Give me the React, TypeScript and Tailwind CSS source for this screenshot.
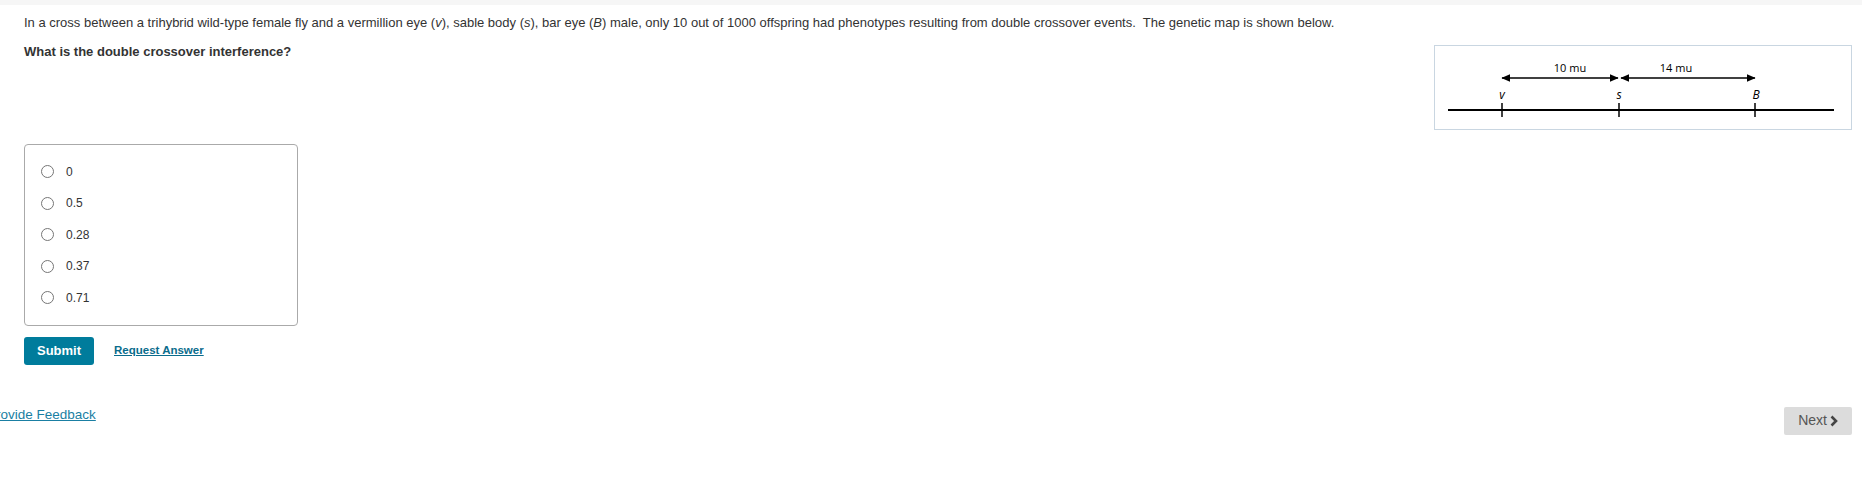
const options = ["0", "0.5", "0.28", "0.37", "0.71"];

const GeneticMap = () => {
  return (
    <div className="mt-px h-[85px] w-[418px] border border-[#c9d6e1] bg-white">
      <svg width="416" height="83" viewBox="0 0 416 83">
        <defs>
          <marker id="ah" markerWidth="7" markerHeight="6" refX="6.5" refY="3" orient="auto-start-reverse">
            <path d="M0,0 L7,3 L0,6 Z" fill="#000" />
          </marker>
        </defs>
        {/* distance arrows */}
        <line x1="67" y1="32" x2="183" y2="32" stroke="#000" strokeWidth="1.3" markerStart="url(#ah)" markerEnd="url(#ah)" />
        <line x1="186" y1="32" x2="320" y2="32" stroke="#000" strokeWidth="1.3" markerStart="url(#ah)" markerEnd="url(#ah)" />
        <text x="135" y="26" fontSize="11" textAnchor="middle" fontFamily="'Open Sans', sans-serif" fill="#000">
          10 mu
        </text>
        <text x="241" y="26" fontSize="11" textAnchor="middle" fontFamily="'Open Sans', sans-serif" fill="#000">
          14 mu
        </text>
        {/* gene labels */}
        <text x="67" y="53" fontSize="12" fontStyle="italic" textAnchor="middle" fontFamily="'Open Sans', sans-serif" fill="#000">
          v
        </text>
        <text x="184" y="53" fontSize="12" fontStyle="italic" textAnchor="middle" fontFamily="'Open Sans', sans-serif" fill="#000">
          s
        </text>
        <text x="321" y="53" fontSize="12" fontStyle="italic" textAnchor="middle" fontFamily="'Open Sans', sans-serif" fill="#000">
          B
        </text>
        {/* chromosome */}
        <line x1="13" y1="64" x2="399" y2="64" stroke="#000" strokeWidth="2" />
        <line x1="67" y1="57" x2="67" y2="71" stroke="#000" strokeWidth="1.5" />
        <line x1="184" y1="57" x2="184" y2="71" stroke="#000" strokeWidth="1.5" />
        <line x1="320" y1="57" x2="320" y2="71" stroke="#000" strokeWidth="1.5" />
      </svg>
    </div>
  );
};

const App = () => {
  return (
    <div className="relative min-h-[479px] w-full overflow-hidden bg-white font-['Liberation_Sans',Arial,sans-serif] text-[#333]">
      <div className="h-[5px] bg-[#f6f6f6]" />
      <p className="mt-[10px] pl-[24px] text-[13px] leading-[16px]">
        In a cross between a trihybrid wild-type female fly and a vermillion eye (<i>v</i>), sable body (<i>s</i>), bar eye (<i>B</i>) male, only 10 out of 1000 offspring had phenotypes resulting from double crossover events.&nbsp; The genetic map is shown below.
      </p>

      <div className="mt-[13px] flex items-start justify-between pl-[24px] pr-[10px]">
        <div className="flex flex-col">
          <p className="text-[13px] font-bold leading-[16px]">What is the double crossover interference?</p>

          <div className="mt-[84px] w-[274px] rounded-[4px] border border-[#aaaaaa] pb-[11px] pl-[16px] pt-[11px]">
            {options.map((opt) => (
              <label key={opt} className="flex h-[31.5px] cursor-pointer items-center gap-[12px]">
                <span className="h-[13px] w-[13px] rounded-full border border-[#767676] bg-white" />
                <span className="text-[12px] leading-[16px]">{opt}</span>
              </label>
            ))}
          </div>

          <div className="mt-[11px] flex items-center gap-[20px]">
            <button
              type="button"
              className="h-[28px] w-[70px] rounded-[3px] bg-[#007c9c] text-[13px] font-bold text-white"
            >
              Submit
            </button>
            <a href="#" className="text-[11.5px] font-bold text-[#0a6c8c] underline">
              Request Answer
            </a>
          </div>
        </div>

        <GeneticMap />
      </div>

      <div className="mt-[42px] flex items-start justify-between pr-[10px]">
        <a href="#" className="-ml-[13px] text-[13.5px] leading-[16px] text-[#1a7fa3] underline">
          Provide Feedback
        </a>
        <button
          type="button"
          className="flex h-[28px] items-center gap-[3px] rounded-[2px] bg-[#dcdcdc] px-[14px] text-[14px] text-[#555]"
        >
          Next
          <svg width="8" height="12" viewBox="0 0 8 12">
            <path d="M1.5 1.5 L6 6 L1.5 10.5" fill="none" stroke="#444" strokeWidth="2.6" />
          </svg>
        </button>
      </div>
    </div>
  );
};

export default App;
